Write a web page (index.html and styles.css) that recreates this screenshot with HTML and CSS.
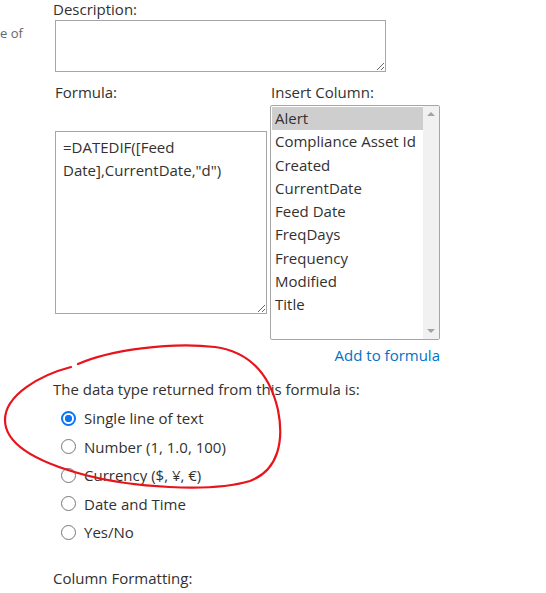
FILE: index.html
```html
<!DOCTYPE html>
<html>
<head>
<meta charset="utf-8">
<link rel="stylesheet" href="styles.css">
</head>
<body>
<div class="page">
  <div class="stub"><span class="stub-text">e of</span></div>
  <div class="main">
    <div class="lbl lbl-desc">Description:</div>
    <textarea class="desc"></textarea>
    <div class="formula-row">
      <div class="formula-col">
        <div class="lbl lbl-formula">Formula:</div>
        <textarea class="formula">=DATEDIF([Feed Date],CurrentDate,"d")</textarea>
      </div>
      <div class="insert-col">
        <div class="lbl lbl-insert">Insert Column:</div>
        <div class="listbox">
          <div class="items">
            <div class="item selected">Alert</div>
            <div class="item">Compliance Asset Id</div>
            <div class="item">Created</div>
            <div class="item">CurrentDate</div>
            <div class="item">Feed Date</div>
            <div class="item">FreqDays</div>
            <div class="item">Frequency</div>
            <div class="item">Modified</div>
            <div class="item">Title</div>
          </div>
          <div class="scrollbar">
            <span class="arrow up"></span>
            <span class="arrow down"></span>
          </div>
        </div>
        <div class="add-link"><a href="#">Add to formula</a></div>
      </div>
    </div>
    <div class="lbl lbl-type">The data type returned from this formula is:</div>
    <div class="radios">
      <label class="radio-row"><input type="radio" name="t" checked><span>Single line of text</span></label>
      <label class="radio-row"><input type="radio" name="t"><span>Number (1, 1.0, 100)</span></label>
      <label class="radio-row"><input type="radio" name="t"><span>Currency ($, ¥, €)</span></label>
      <label class="radio-row"><input type="radio" name="t"><span>Date and Time</span></label>
      <label class="radio-row"><input type="radio" name="t"><span>Yes/No</span></label>
    </div>
    <div class="lbl lbl-format">Column Formatting:</div>
  </div>
</div>
<svg class="scribble" width="546" height="593" viewBox="0 0 546 593">
  <path d="M78,364 C110,350 170,342 215,347 C250,352 270,375 278,410 C284,440 279,470 250,481 C210,493 130,487 85,475 C40,463 5,446 5,420 C5,395 40,375 71,367" fill="none" stroke="#e8141b" stroke-width="2.2" stroke-linecap="round"/>
</svg>
</body>
</html>
```

FILE: styles.css
```css
html, body {
  margin: 0;
  padding: 0;
  background: #fff;
}
body {
  font-family: "Open Sans", "Noto Sans", sans-serif;
  font-size: 15px;
  color: #323130;
  width: 546px;
  height: 593px;
  overflow: hidden;
  position: relative;
}
.page {
  display: flex;
}
.stub {
  width: 53px;
  flex: none;
  padding-top: 24px;
  font-size: 13px;
  color: #666;
  line-height: 18px;
  overflow: hidden;
}
.stub-text {
  display: block;
}
.main {
  flex: none;
  width: 420px;
  display: flex;
  flex-direction: column;
}
.lbl {
  line-height: 20px;
}
.lbl-desc {
  height: 20px;
  margin-top: -1px;
  margin-bottom: 1px;
}
textarea {
  font-family: "Open Sans", "Noto Sans", sans-serif;
  font-size: 15px;
  color: #323130;
  border: 1px solid #a6a6a6;
  box-sizing: border-box;
  display: block;
  margin: 0;
  outline: none;
}
.desc {
  margin-left: 2px;
  width: 331px;
  height: 52px;
  resize: both;
}
.formula-row {
  display: flex;
  gap: 3px;
  margin-left: 2px;
  margin-top: 10px;
}
.formula-col {
  width: 212px;
  display: flex;
  flex-direction: column;
}
.lbl-formula {
  height: 49px;
}
.formula {
  width: 212px;
  height: 183px;
  padding: 4px 7px;
  line-height: 23px;
}
.insert-col {
  width: 170px;
  display: flex;
  flex-direction: column;
}
.lbl-insert {
  height: 23px;
  margin-left: 1px;
}
.listbox {
  height: 235px;
  border: 1px solid #a6a6a6;
  border-radius: 2px;
  box-sizing: border-box;
  display: flex;
  padding: 1px;
}
.items {
  flex: 1;
}
.item {
  height: 23.3px;
  line-height: 23.3px;
  padding-left: 3px;
  white-space: nowrap;
  overflow: hidden;
}
.item.selected {
  background: #cecece;
}
.scrollbar {
  width: 16px;
  flex: none;
  background: #f1f1f1;
  margin: -1px -1px -1px 0;
  position: relative;
}
.arrow {
  position: absolute;
  left: 4px;
  width: 0;
  height: 0;
  border-left: 4px solid transparent;
  border-right: 4px solid transparent;
}
.arrow.up {
  top: 6px;
  border-bottom: 4px solid #a3a3a3;
}
.arrow.down {
  bottom: 6px;
  border-top: 4px solid #a3a3a3;
}
.add-link {
  text-align: right;
  line-height: 20px;
  margin-top: 5px;
}
.add-link a {
  color: #0072c6;
  text-decoration: none;
}
.lbl-type {
  margin-top: 14px;
}
.radios {
  margin-top: 5px;
  display: flex;
  flex-direction: column;
}
.radio-row {
  height: 28.5px;
  display: flex;
  align-items: center;
  padding-left: 8px;
  gap: 8px;
}
.radio-row input {
  appearance: none;
  -webkit-appearance: none;
  margin: 0;
  width: 15px;
  height: 15px;
  border: 1.5px solid #767676;
  border-radius: 50%;
  box-sizing: border-box;
  background: #fff;
}
.radio-row input:checked {
  border: 2px solid #0b75f5;
  background: radial-gradient(circle, #0b75f5 0 3.4px, #fff 3.9px);
}
.lbl-format {
  margin-top: 21px;
}
.scribble {
  position: absolute;
  top: 0;
  left: 0;
  pointer-events: none;
}
```
